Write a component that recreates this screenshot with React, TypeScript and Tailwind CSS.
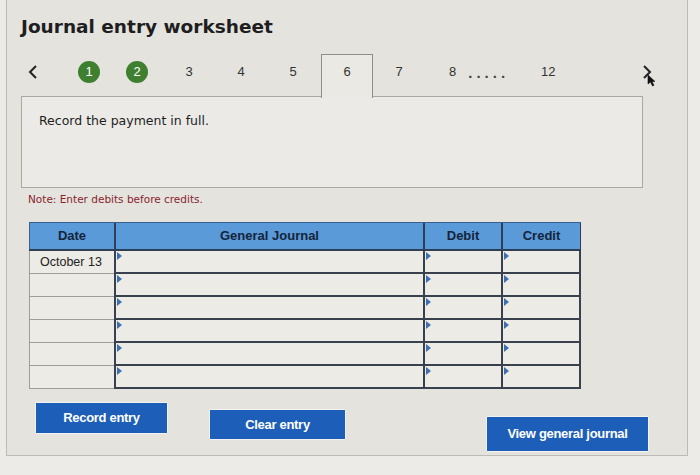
import React from "react";

const verdana = { fontFamily: '"DejaVu Sans", Verdana, sans-serif' };
const arial = { fontFamily: '"Liberation Sans", Arial, sans-serif' };

function Marker() {
  return (
    <span className="absolute left-[1px] top-[1px] w-0 h-0 border-t-[4px] border-b-[4px] border-l-[5px] border-t-transparent border-b-transparent border-l-[#3d6fb0]" />
  );
}

export default function App() {
  const rows = ["October 13", "", "", "", "", ""];
  return (
    <div className="w-[700px] h-[475px] bg-[#ecebe7] overflow-hidden relative" style={arial}>
      <div className="ml-[6px] w-[682px] h-[456px] border-l border-r border-b border-[#bcbbb6] bg-[#e4e3de] flex flex-col">
        {/* Title */}
        <div className="pl-[14px] pt-[15px] h-[54px]">
          <h1 className="text-[18.5px] font-bold text-[#1e1e1e] leading-[24px]" style={verdana}>
            Journal entry worksheet
          </h1>
        </div>

        {/* Nav */}
        <div className="flex items-center h-[43px] pb-[7px] text-[13px] text-[#333]">
          <div className="w-[52px] flex justify-center">
            <svg width="12" height="16" viewBox="0 0 12 16">
              <path d="M9 2 L3 8 L9 14" fill="none" stroke="#222" strokeWidth="2" />
            </svg>
          </div>
          <div className="ml-[6px] w-[48px] flex justify-center">
            <span className="w-[22px] h-[22px] rounded-full bg-[#3f8030] text-white flex items-center justify-center text-[13px]">1</span>
          </div>
          <div className="w-[48px] flex justify-center">
            <span className="w-[22px] h-[22px] rounded-full bg-[#3f8030] text-white flex items-center justify-center text-[13px]">2</span>
          </div>
          <div className="w-[56px] text-center">3</div>
          <div className="w-[48px] text-center">4</div>
          <div className="w-[56px] text-center">5</div>
          <div className="w-[52px] self-start border-t border-l border-r border-[#8e8d89] bg-[#eae9e4] flex items-center justify-center pb-[10px] relative z-10 h-[44px]">
            6
          </div>
          <div className="w-[52px] text-center">7</div>
          <div className="pl-[24px] flex items-center">
            <span>8</span>
            <span className="ml-[12px] tracking-[4px] text-[15px] font-bold text-[#444] leading-[13px]">.....</span>
            <span className="ml-[32px]">12</span>
          </div>
          <div className="ml-auto mr-[14px] w-[52px] flex justify-center relative">
            <svg width="12" height="16" viewBox="0 0 12 16">
              <path d="M3 2 L9 8 L3 14" fill="none" stroke="#222" strokeWidth="2" />
            </svg>
            <svg className="absolute left-[26px] top-[10px]" width="9" height="13" viewBox="0 0 9 13">
              <path d="M1 1 L1 10 L3.5 8 L5.5 12 L7 11.3 L5 7.5 L8 7.5 Z" fill="#111" stroke="#111" strokeWidth="0.6" />
            </svg>
          </div>
        </div>

        {/* Content box */}
        <div className="ml-[14px] -mt-px w-[622px] h-[92px] border border-[#a9a8a3] bg-[#ebeae6] pl-[17px] pt-[15px]">
          <p className="text-[12.5px] text-[#1e1e1e]" style={verdana}>
            Record the payment in full.
          </p>
        </div>

        {/* Note */}
        <p className="ml-[21px] mt-[4px] text-[10.5px] text-[#8a1f2e] leading-[14px]" style={verdana}>
          Note: Enter debits before credits.
        </p>

        {/* Table */}
        <div className="ml-[22px] mt-[16px] w-[552px]">
          <div className="grid grid-cols-[85px_309px_78px_80px] h-[27px] bg-[#5b9ad8] border-t border-[#3a5f8f] text-[13px] font-bold text-[#14243a]">
            <div className="flex items-center justify-center border-l border-[#3a5f8f]">Date</div>
            <div className="flex items-center justify-center border-l-2 border-[#2e3e55]">General Journal</div>
            <div className="flex items-center justify-center border-l-2 border-[#2e3e55]">Debit</div>
            <div className="flex items-center justify-center border-l-2 border-r border-[#2e3e55]">Credit</div>
          </div>
          <div className="border-t-2 border-[#2e3e55]">
            {rows.map((d, i) => (
              <div key={i} className="grid grid-cols-[85px_309px_78px_80px] h-[23px] bg-[#ecebe6]">
                <div className="border-l border-b border-[#9e9d99] flex items-center pl-[10px] text-[12.5px] text-[#222]">{d}</div>
                <div className="relative border-l-2 border-b-2 border-[#39414e]"><Marker /></div>
                <div className="relative border-l-2 border-b-2 border-[#39414e]"><Marker /></div>
                <div className="relative border-l-2 border-r-2 border-b-2 border-[#39414e]"><Marker /></div>
              </div>
            ))}
          </div>
        </div>

        {/* Buttons */}
        <div className="flex items-start ml-[28px] mt-[13px] text-white font-bold text-[13px]">
          <button className="w-[133px] h-[32px] bg-[#1d5eb9] border border-[#f2f2f2] rounded-[1px] tracking-[-0.3px]">Record entry</button>
          <button className="ml-[41px] mt-[7px] w-[137px] h-[31px] bg-[#1d5eb9] border border-[#f2f2f2] rounded-[1px] tracking-[-0.3px]">Clear entry</button>
          <button className="ml-[140px] mt-[14px] w-[163px] h-[36px] bg-[#1d5eb9] border border-[#f2f2f2] rounded-[1px] tracking-[-0.3px]">View general journal</button>
        </div>
      </div>
    </div>
  );
}
